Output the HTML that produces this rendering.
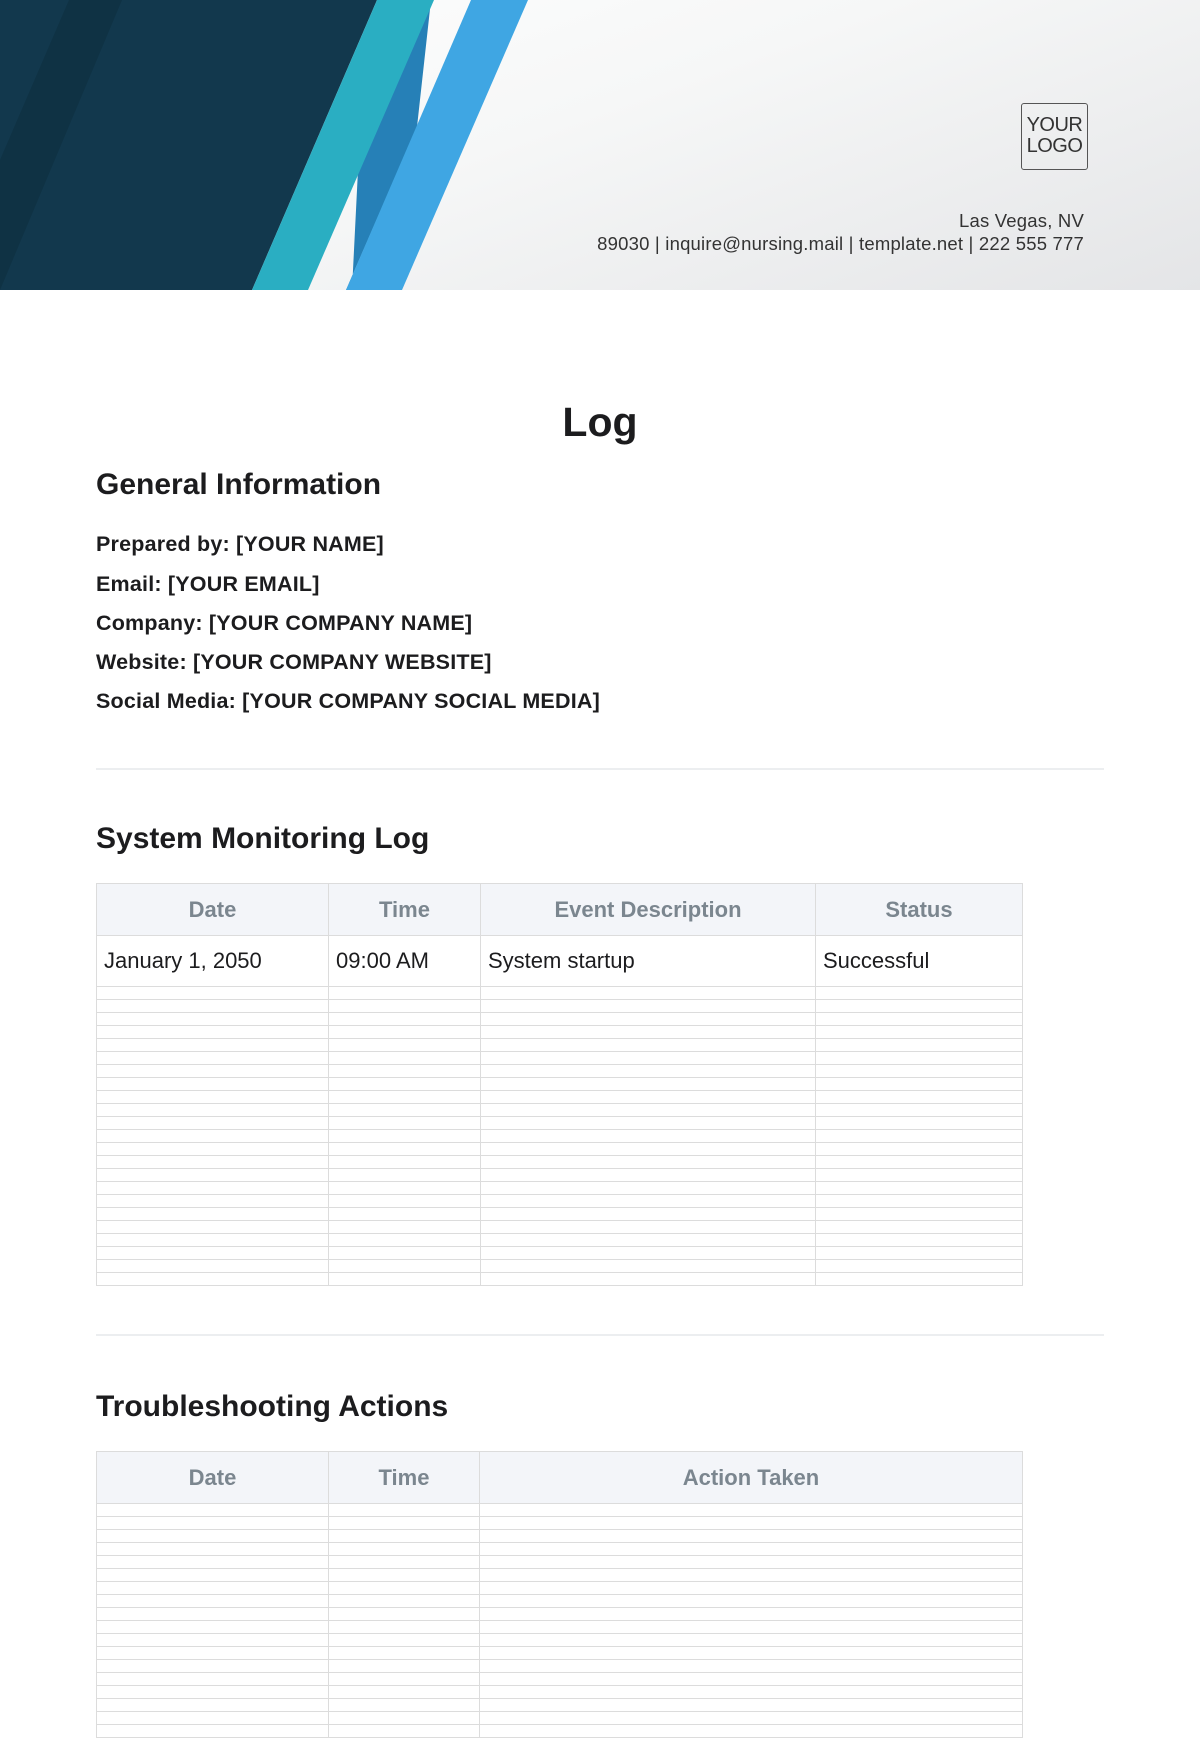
<!DOCTYPE html>
<html><head><meta charset="utf-8">
<style>
*{margin:0;padding:0;box-sizing:border-box}
body{width:1200px;height:1700px;overflow:hidden;background:#fff;font-family:"Liberation Sans",Arial,sans-serif;color:#1c1c1e;position:relative}
.hdr{position:absolute;left:0;top:0;width:1200px;height:290px;background:linear-gradient(160deg,#ffffff 0%,#f6f7f7 45%,#e4e5e7 100%);overflow:hidden}
.logo{position:absolute;left:1021px;top:103px;width:67px;height:67px;border:1.5px solid #555;border-radius:3px;font-size:20px;line-height:21px;color:#333;text-align:center;padding-top:11px;letter-spacing:-0.5px}
.addr{position:absolute;right:116px;text-align:right;font-size:18.5px;color:#333;letter-spacing:0.2px}
h1{position:absolute;left:0;width:1200px;text-align:center;top:399px;font-size:41px;font-weight:bold}
h2{font-size:30px;font-weight:bold;position:absolute;left:96px}
.info{position:absolute;left:96px;font-size:21.5px;font-weight:bold;letter-spacing:0.2px}
.hr{position:absolute;left:96px;width:1008px;height:2px;background:#eceef0}
table{position:absolute;left:96px;border-collapse:collapse;table-layout:fixed}
td,th{border:1px solid #dcdcdc;font-size:22px}
th{background:#f3f5f9;color:#7b868f;height:52px;font-weight:bold}
td.d{height:51px;padding-left:7px}
tr.e td{height:13px}
</style></head><body>
<div class="hdr">
<svg width="1200" height="290" style="position:absolute;left:0;top:0">
<polygon points="0,0 377,0 252,290 0,290" fill="#12384d"/>
<polygon points="69,0 122,0 0,290 0,160" fill="#0f3244"/>
<polygon points="425,0 431,0 417,127 346,290 348,290 352,290 358,170 372,120" fill="#2680b7"/>
<polygon points="377,0 434,0 308,290 252,290" fill="#2aaec2"/>
<polygon points="471,0 528,0 402,290 346,290" fill="#3fa6e3"/>
</svg>
<div class="logo">YOUR<br>LOGO</div>
<div class="addr" style="top:210px">Las Vegas, NV</div>
<div class="addr" style="top:233px">89030 | inquire@nursing.mail | template.net | 222 555 777</div>
</div>
<h1>Log</h1>
<h2 style="top:468px">General Information</h2>
<div class="info" style="top:532px">Prepared by: [YOUR NAME]</div>
<div class="info" style="top:572px">Email: [YOUR EMAIL]</div>
<div class="info" style="top:611px">Company: [YOUR COMPANY NAME]</div>
<div class="info" style="top:650px">Website: [YOUR COMPANY WEBSITE]</div>
<div class="info" style="top:689px">Social Media: [YOUR COMPANY SOCIAL MEDIA]</div>
<div class="hr" style="top:768px"></div>
<h2 style="top:822px">System Monitoring Log</h2>
<table style="top:883px;width:926px">
<colgroup><col style="width:232px"><col style="width:152px"><col style="width:335px"><col style="width:207px"></colgroup>
<tr><th>Date</th><th>Time</th><th>Event Description</th><th>Status</th></tr>
<tr><td class="d">January 1, 2050</td><td class="d">09:00 AM</td><td class="d">System startup</td><td class="d">Successful</td></tr>
<tr class="e"><td></td><td></td><td></td><td></td></tr><tr class="e"><td></td><td></td><td></td><td></td></tr><tr class="e"><td></td><td></td><td></td><td></td></tr><tr class="e"><td></td><td></td><td></td><td></td></tr><tr class="e"><td></td><td></td><td></td><td></td></tr><tr class="e"><td></td><td></td><td></td><td></td></tr><tr class="e"><td></td><td></td><td></td><td></td></tr><tr class="e"><td></td><td></td><td></td><td></td></tr><tr class="e"><td></td><td></td><td></td><td></td></tr><tr class="e"><td></td><td></td><td></td><td></td></tr><tr class="e"><td></td><td></td><td></td><td></td></tr><tr class="e"><td></td><td></td><td></td><td></td></tr><tr class="e"><td></td><td></td><td></td><td></td></tr><tr class="e"><td></td><td></td><td></td><td></td></tr><tr class="e"><td></td><td></td><td></td><td></td></tr><tr class="e"><td></td><td></td><td></td><td></td></tr><tr class="e"><td></td><td></td><td></td><td></td></tr><tr class="e"><td></td><td></td><td></td><td></td></tr><tr class="e"><td></td><td></td><td></td><td></td></tr><tr class="e"><td></td><td></td><td></td><td></td></tr><tr class="e"><td></td><td></td><td></td><td></td></tr><tr class="e"><td></td><td></td><td></td><td></td></tr><tr class="e"><td></td><td></td><td></td><td></td></tr>
</table>
<div class="hr" style="top:1334px"></div>
<h2 style="top:1390px">Troubleshooting Actions</h2>
<table style="top:1451px;width:926px">
<colgroup><col style="width:232px"><col style="width:151px"><col style="width:543px"></colgroup>
<tr><th>Date</th><th>Time</th><th>Action Taken</th></tr>
<tr class="e"><td></td><td></td><td></td></tr><tr class="e"><td></td><td></td><td></td></tr><tr class="e"><td></td><td></td><td></td></tr><tr class="e"><td></td><td></td><td></td></tr><tr class="e"><td></td><td></td><td></td></tr><tr class="e"><td></td><td></td><td></td></tr><tr class="e"><td></td><td></td><td></td></tr><tr class="e"><td></td><td></td><td></td></tr><tr class="e"><td></td><td></td><td></td></tr><tr class="e"><td></td><td></td><td></td></tr><tr class="e"><td></td><td></td><td></td></tr><tr class="e"><td></td><td></td><td></td></tr><tr class="e"><td></td><td></td><td></td></tr><tr class="e"><td></td><td></td><td></td></tr><tr class="e"><td></td><td></td><td></td></tr><tr class="e"><td></td><td></td><td></td></tr><tr class="e"><td></td><td></td><td></td></tr><tr class="e"><td></td><td></td><td></td></tr>
</table>
</body></html>
